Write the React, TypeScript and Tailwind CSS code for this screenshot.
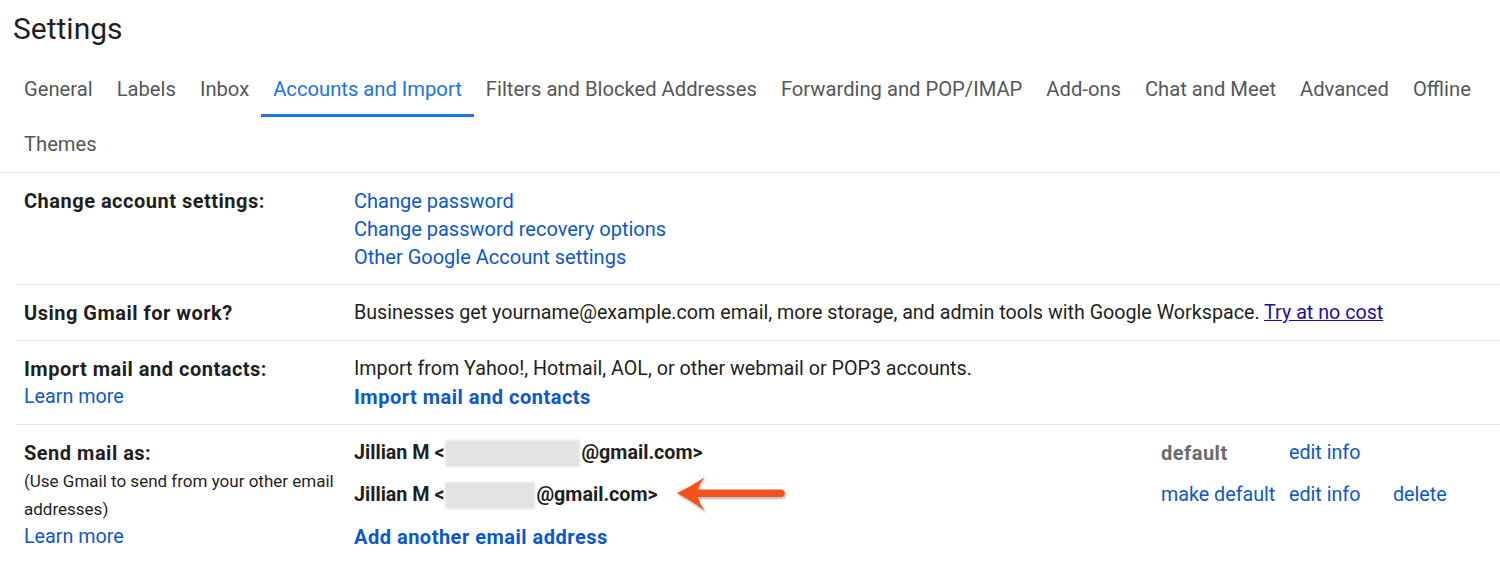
import React from 'react';

const tabs = [
  'General',
  'Labels',
  'Inbox',
  'Accounts and Import',
  'Filters and Blocked Addresses',
  'Forwarding and POP/IMAP',
  'Add-ons',
  'Chat and Meet',
  'Advanced',
  'Offline',
];

const font = { fontFamily: 'Roboto, "Noto Sans", sans-serif' };

function Row({ label, children }: { label: React.ReactNode; children: React.ReactNode }) {
  return (
    <div className="ml-4 flex border-t border-[#e5e5e5] pt-[14px] pb-[13px] pl-2">
      <div className="w-[330px] shrink-0">{label}</div>
      <div className="flex-1">{children}</div>
    </div>
  );
}

function Blur({ w }: { w: string }) {
  return <span className={`mx-[1px] h-[27px] bg-[#e3e3e3] blur-[1px] ${w}`} />;
}

function Tab({ label, active }: { label: string; active?: boolean }) {
  return (
    <div
      className={`flex h-[55px] items-center px-[12px] pt-[1px] text-[20.2px] border-b-[3px] ${
        active ? 'border-[#1a73e8] text-[#1a73e8]' : 'border-transparent text-[#54575b]'
      }`}
    >
      {label}
    </div>
  );
}

export default function App() {
  return (
    <div className="min-h-screen bg-white text-[19.7px] leading-[28px] text-[#1f1f1f]" style={font}>
      <h1 className="pl-[13px] pt-[9px] text-[30px] leading-[40px] font-normal text-[#1f1f1f]">Settings</h1>

      {/* tabs */}
      <div className="mt-[13px] flex flex-wrap border-b border-[#e5e5e5] pl-[12px]">
        {tabs.map((t) => (
          <Tab key={t} label={t} active={t === 'Accounts and Import'} />
        ))}
        <div className="basis-full" />
        <Tab label="Themes" />
      </div>

      <div className="flex pt-[14px] pb-[13px] pl-6">
        <div className="w-[330px] shrink-0 text-[20px] font-bold tracking-[0.5px]">Change account settings:</div>
        <div className="flex flex-col text-[20px] text-[#0b57d0]">
          <div>Change password</div>
          <div>Change password recovery options</div>
          <div>Other Google Account settings</div>
        </div>
      </div>

      <Row label={<div className="text-[20px] font-bold tracking-[0.5px]">Using Gmail for work?</div>}>
        Businesses get yourname@example.com email, more storage, and admin tools with Google Workspace.{' '}
        <span className="text-[#1a0dab] underline">Try at no cost</span>
      </Row>

      <Row
        label={
          <div className="flex flex-col">
            <div className="text-[20px] font-bold tracking-[0.5px]">Import mail and contacts:</div>
            <div className="text-[#0b57d0]">Learn more</div>
          </div>
        }
      >
        <div className="flex flex-col">
          <div>Import from Yahoo!, Hotmail, AOL, or other webmail or POP3 accounts.</div>
          <div className="text-[20px] font-bold tracking-[0.5px] text-[#0b57d0]">Import mail and contacts</div>
        </div>
      </Row>

      <Row
        label={
          <div className="flex flex-col">
            <div className="text-[20px] font-bold tracking-[0.5px]">Send mail as:</div>
            <div className="text-[17px] leading-[28px]">(Use Gmail to send from your other email addresses)</div>
            <div className="text-[#0b57d0]">Learn more</div>
          </div>
        }
      >
        <div className="flex flex-col gap-[14px]">
          <div className="grid h-[28px] grid-cols-[807px_128px_104px_1fr] items-center">
            <div className="flex h-[28px] items-center font-bold">
              <span>Jillian M &lt;</span>
              <Blur w="w-[135px]" />
              <span>@gmail.com&gt;</span>
            </div>
            <div className="text-[20px] font-bold tracking-[0.5px] text-[#6b6b6b]">default</div>
            <div className="text-[#0b57d0]">edit info</div>
            <div />
          </div>
          <div className="grid h-[28px] grid-cols-[807px_128px_104px_1fr] items-center">
            <div className="flex h-[28px] items-center font-bold">
              <span>Jillian M &lt;</span>
              <Blur w="w-[90px]" />
              <span>@gmail.com&gt;</span>
              <svg className="ml-[16px] shrink-0" width="115" height="38" viewBox="0 0 115 38">
                <defs>
                  <filter id="sh" x="-10%" y="-30%" width="130%" height="170%">
                    <feDropShadow dx="1" dy="2" stdDeviation="1.3" floodColor="#000" floodOpacity="0.28" />
                  </filter>
                </defs>
                <path
                  filter="url(#sh)"
                  fill="#f4511e"
                  d="M3 17 Q18 10 31 1 Q25 8 24 13.5 L107 13.5 A3.75 3.75 0 0 1 107 21 L24 21 Q25 27 31 35 Q18 25 3 17 Z"
                />
              </svg>
            </div>
            <div className="text-[#0b57d0]">make default</div>
            <div className="text-[#0b57d0]">edit info</div>
            <div className="text-[#0b57d0]">delete</div>
          </div>
          <div className="text-[20px] font-bold tracking-[0.5px] text-[#0b57d0]">Add another email address</div>
        </div>
      </Row>
    </div>
  );
}
